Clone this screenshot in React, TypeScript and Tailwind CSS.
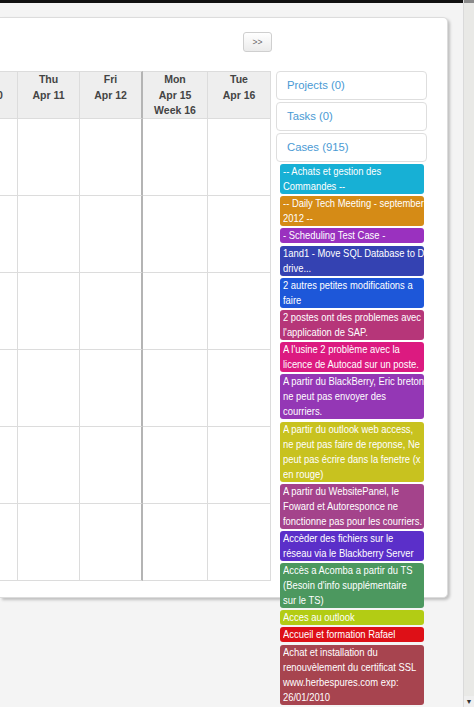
import React from "react";

type Item = { c: string; l: string[] };

const items: Item[] = [
  { c: "#17b0d5", l: ["-- Achats et gestion des", "Commandes --"] },
  { c: "#d58b16", l: ["-- Daily Tech Meeting - september", "2012 --"] },
  { c: "#9a31bf", l: ["- Scheduling Test Case -"] },
  { c: "#3442b2", l: ["1and1 - Move SQL Database to D", "drive..."] },
  { c: "#1d57d9", l: ["2 autres petites modifications a", "faire"] },
  { c: "#b63679", l: ["2 postes ont des problemes avec", "l'application de SAP."] },
  { c: "#dc1a80", l: ["A l'usine 2 problème avec la", "licence de Autocad sur un poste."] },
  { c: "#9437b5", l: ["A partir du BlackBerry, Eric breton", "ne peut pas envoyer des", "courriers."] },
  {
    c: "#c8c21f",
    l: ["A partir du outlook web access,", "ne peut pas faire de reponse, Ne", "peut pas écrire dans la fenetre (x", "en rouge)"],
  },
  { c: "#a4438b", l: ["A partir du WebsitePanel, le", "Foward et Autoresponce ne", "fonctionne pas pour les courriers."] },
  { c: "#5b2fc9", l: ["Accèder des fichiers sur le", "réseau via le Blackberry Server"] },
  { c: "#4c985f", l: ["Accès a Acomba a partir du TS", "(Besoin d'info supplémentaire", "sur le TS)"] },
  { c: "#b3cc14", l: ["Acces au outlook"] },
  { c: "#de1017", l: ["Accueil et formation Rafael"] },
  {
    c: "#a7444f",
    l: ["Achat et installation du", "renouvèlement du certificat SSL", "www.herbespures.com exp:", "26/01/2010"],
  },
];

const headers: string[][] = [
  ["Wed", "Apr 10"],
  ["Thu", "Apr 11"],
  ["Fri", "Apr 12"],
  ["Mon", "Apr 15", "Week 16"],
  ["Tue", "Apr 16"],
];

function cellBorder(i: number) {
  return i === 2 ? "border-r-2 border-r-[#b4b4b4]" : "border-r border-r-[#dcdcdc]";
}

export default function App() {
  const rows = [0, 1, 2, 3, 4, 5];
  return (
    <div className="flex h-[707px] w-full overflow-hidden bg-[#f4f4f4] font-['Liberation_Sans',Arial,sans-serif]">
      <div className="flex min-w-0 flex-1 flex-col">
        <div className="h-[3px] w-full bg-[#111]" />
        <div className="pt-[14px]">
          <div className="h-[581px] w-[448px] rounded-r-[5px] border border-l-0 border-[#dcdcdc] bg-white shadow-[2px_2px_3px_rgba(0,0,0,0.22)]">
            <div className="pt-[14px]">
              <div className="flex w-[272px] justify-end">
                <button className="flex h-[20px] w-[29px] items-center justify-center rounded-[3px] border border-[#cfcfcf] bg-linear-to-b from-white to-[#ebebeb] text-[8.5px] text-[#666]">
                  &gt;&gt;
                </button>
              </div>
              <div className="mt-[19px] flex items-start">
                <div className="w-[272px] shrink-0 overflow-hidden">
                  <div className="ml-[-44px] grid w-[315px] grid-cols-[62px_62px_63px_65px_63px]">
                    {headers.map((h, i) => (
                      <div
                        key={"h" + i}
                        className={`h-[48px] border-y border-y-[#dcdcdc] bg-[#eeeeee] text-center text-[10.5px] font-bold leading-[15.5px] text-[#444] ${cellBorder(i)}`}
                      >
                        {h.map((t) => (
                          <div key={t}>{t}</div>
                        ))}
                      </div>
                    ))}
                    {rows.map((r) =>
                      headers.map((_, i) => (
                        <div
                          key={r + "-" + i}
                          className={`h-[77px] border-b border-b-[#dcdcdc] bg-white ${cellBorder(i)}`}
                        />
                      ))
                    )}
                  </div>
                </div>
                <div className="ml-[4px] flex w-[151px] shrink-0 flex-col">
                  <div className="flex flex-col gap-[2px]">
                    {["Projects (0)", "Tasks (0)", "Cases (915)"].map((t) => (
                      <div
                        key={t}
                        className="flex h-[29px] items-center rounded-[4px] border border-[#dedede] bg-white pl-[10px] text-[11.3px] text-[#4a9ad4]"
                      >
                        {t}
                      </div>
                    ))}
                  </div>
                  <div className="mt-[2px] ml-[4px] flex w-[144px] flex-col gap-[2.2px]">
                    {items.map((it, idx) => (
                      <div
                        key={idx}
                        className="overflow-hidden rounded-[3px] pl-[3px] text-[11px] leading-[15px] text-white"
                        style={{ backgroundColor: it.c }}
                      >
                        {it.l.map((line, j) => (
                          <div key={j} className="origin-left scale-x-[0.855] whitespace-nowrap">
                            {line}
                          </div>
                        ))}
                      </div>
                    ))}
                  </div>
                </div>
              </div>
            </div>
          </div>
        </div>
      </div>
      <div className="flex w-[11px] shrink-0 flex-col border-l border-l-[#dadada] bg-[#e9e9e6]">
        <div className="h-[3px] bg-[#8a8a8a]" />
        <div className="flex-1" />
        <div className="flex h-[11px] items-center justify-center bg-[#efefef] text-[7px] leading-none text-[#333]">
          ▼
        </div>
      </div>
    </div>
  );
}
